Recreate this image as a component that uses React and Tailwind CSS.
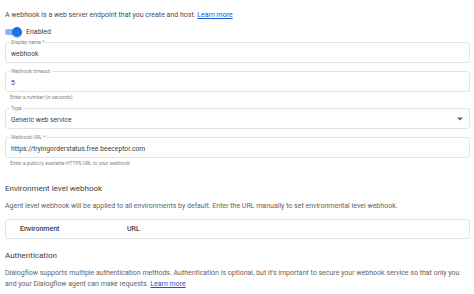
// Outlined text field with a floating label sitting in the border notch
function Field({ label, value, helper, select }) {
  return (
    <div>
      <div className="relative h-[21px] rounded-[3px] border border-[#e3e3e3] flex items-center pl-[5px] pr-[6px]">
        <span className="absolute left-[4px] top-[-4px] bg-white px-[1px] text-[5px] leading-[7px] text-[#80868b]">
          {label}
        </span>
        <span className="flex-1 text-[6.8px] text-[#3c4043] pt-[3px]">{value}</span>
        {select && (
          <svg width="6" height="4" viewBox="0 0 10 5" className="mt-[1px]">
            <path d="M0 0l5 5 5-5z" fill="#5f6368" />
          </svg>
        )}
      </div>
      {helper && (
        <p className="pl-[5px] pt-[2px] text-[5px] leading-[6px] text-[#80868b]">{helper}</p>
      )}
    </div>
  );
}

export default function App() {
  return (
    <div className="w-[474px] h-[294px] overflow-hidden bg-white px-[5px] pr-[4px] font-['Roboto',sans-serif] text-[#5f6368]">
      <p className="pt-[10px] text-[7px] leading-[10px] text-[#4a4d51]">
        A webhook is a web server endpoint that you create and host.{' '}
        <a className="text-[#1a57d6] underline">Learn more</a>
      </p>

      {/* Enabled toggle */}
      <div className="mt-[7px] flex items-center h-[10px]">
        <div className="relative w-[17px] h-[10px] flex items-center">
          <div className="w-[15px] h-[6px] rounded-full bg-[#8ab4f8]" />
          <div className="absolute right-0 w-[10px] h-[10px] rounded-full bg-[#1a73e8] shadow-[0_1px_1px_rgba(0,0,0,0.25)]" />
        </div>
        <span className="ml-[4px] text-[7px] text-[#3c4043]">Enabled</span>
      </div>

      <div className="mt-[5px] flex flex-col gap-[8px]">
        <Field label="Display name *" value="webhook" />
        <Field label="Webhook timeout" value="5" helper="Enter a number (in seconds)" />
        <Field label="Type" value="Generic web service" select />
        <Field
          label="Webhook URL *"
          value="https://tryingorderstatus.free.beeceptor.com"
          helper="Enter a publicly available HTTPS URL to your webhook"
        />
      </div>

      <h2 className="mt-[18px] text-[8px] leading-[10px] text-[#3c4043]">Environment level webhook</h2>
      <p className="mt-[8px] text-[7px] leading-[9px]">
        Agent level webhook will be applied to all environments by default. Enter the URL manually to set environmental level webhook.
      </p>

      <div className="mt-[8px] h-[20px] rounded-[3px] border border-[#e3e3e3] flex items-center text-[7px] font-medium text-[#3c4043]">
        <span className="pl-[14px] w-[121px]">Environment</span>
        <span>URL</span>
      </div>

      <h2 className="mt-[12px] text-[8px] leading-[10px] text-[#3c4043]">Authentication</h2>
      <p className="mt-[7px] text-[7px] leading-[11px]">
        Dialogflow supports multiple authentication methods. Authentication is optional, but it's important to secure your webhook service so that only you and your Dialogflow agent can make requests.{' '}
        <a className="text-[#1a57d6] underline">Learn more</a>
      </p>
    </div>
  );
}
